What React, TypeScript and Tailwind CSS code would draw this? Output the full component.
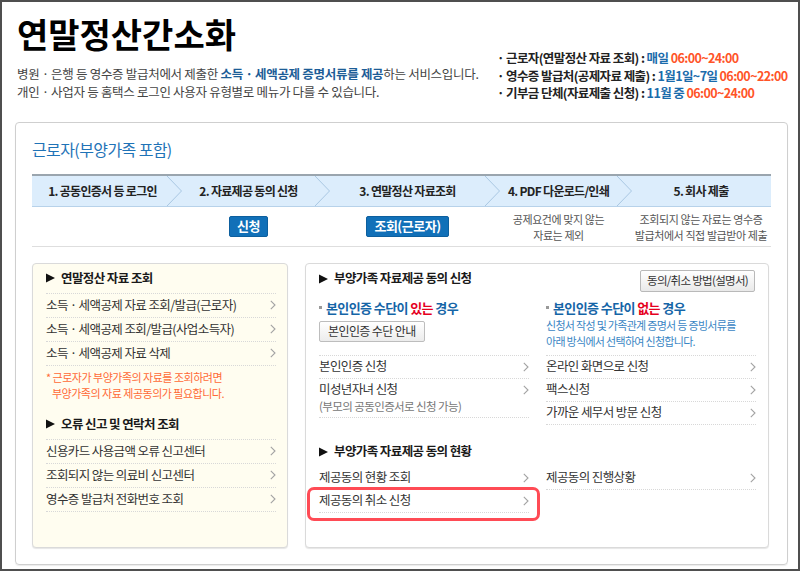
import React from "react";

// small grey chevron used at the end of every list row
function Arrow() {
  return (
    <svg width="6" height="10" viewBox="0 0 6 10" className="shrink-0">
      <polyline points="0.8,0.8 5,5 0.8,9.2" fill="none" stroke="#a3a3a3" strokeWidth="1.1" />
    </svg>
  );
}

function Tri() {
  return (
    <svg width="9" height="10" viewBox="0 0 9 10" className="shrink-0">
      <polygon points="0,0.5 9,5 0,9.5" fill="#111" />
    </svg>
  );
}

function StepArrow() {
  return (
    <svg width="15" height="30" viewBox="0 0 15 30" className="shrink-0">
      <polyline points="0,0 14.5,15 0,30" fill="none" stroke="#a9c7e2" strokeWidth="1" />
    </svg>
  );
}

interface RowProps {
  label: string;
}

function Row({ label }: RowProps) {
  return (
    <div className="flex items-center justify-between h-[24px] border-b border-dotted border-[#d8d8d8] text-[#333]">
      <span>{label}</span>
      <Arrow />
    </div>
  );
}

function SubRow({ label }: RowProps) {
  return (
    <div className="flex items-center justify-between h-[23px] border-b border-dotted border-[#d8d8d8] text-[#333]">
      <span>{label}</span>
      <Arrow />
    </div>
  );
}

function Heading({ children }: { children: React.ReactNode }) {
  return (
    <div className="flex items-center gap-[6px] font-bold text-[#1a1a1a]">
      <Tri />
      <span>{children}</span>
    </div>
  );
}

export default function App() {
  return (
    <div className="w-[800px] h-[571px] border-2 border-[#4f4f4f] bg-white overflow-hidden font-['Noto_Sans_CJK_KR','Malgun_Gothic',sans-serif] text-[12.5px] tracking-[-0.6px]">
      {/* header */}
      <div className="flex pl-[15px]">
        <div className="w-[480px] shrink-0">
          <h1 className="pt-[12px] text-[34px] leading-[40px] font-bold tracking-normal text-black">연말정산간소화</h1>
          <p className="mt-[11px] leading-[18px] text-[#444] tracking-[-0.3px] whitespace-nowrap">
            병원 · 은행 등 영수증 발급처에서 제출한{" "}
            <b className="text-[#1d5d97]">소득 · 세액공제 증명서류를 제공</b>하는 서비스입니다.
            <br />
            개인 · 사업자 등 홈택스 로그인 사용자 유형별로 메뉴가 다를 수 있습니다.
          </p>
        </div>
        <div className="pt-[47px] font-bold leading-[17.5px] text-[#222] whitespace-nowrap">
          <div>
            · 근로자(연말정산 자료 조회) : <span className="text-[#1a6bab]">매일</span>{" "}
            <span className="text-[#ff5428]">06:00~24:00</span>
          </div>
          <div>
            · 영수증 발급처(공제자료 제출) : <span className="text-[#1a6bab]">1월1일~7일</span>{" "}
            <span className="text-[#ff5428]">06:00~22:00</span>
          </div>
          <div>
            · 기부금 단체(자료제출 신청) : <span className="text-[#1a6bab]">11월 중</span>{" "}
            <span className="text-[#ff5428]">06:00~24:00</span>
          </div>
        </div>
      </div>

      {/* main card */}
      <div className="mt-[20px] ml-[13px] w-[773px] border border-[#cfcfcf] rounded-[4px] shadow-[0_1px_1px_rgba(0,0,0,0.08)] px-[16px] pt-[16px] pb-[16px]">
        <div className="text-[16px] leading-[20px] text-[#1f73b7] tracking-[-0.6px]">근로자(부양가족 포함)</div>

        {/* steps */}
        <div className="mt-[15px] flex h-[33px] border-t-2 border-t-[#9aa5ae] border-b border-b-[#b7d2ea] bg-[#dcedfc] font-bold text-[12px] tracking-[-0.7px] text-[#222]">
          <div className="w-[135px] flex items-center justify-center pl-[6px]">1. 공동인증서 등 로그인</div>
          <StepArrow />
          <div className="w-[133px] flex items-center justify-center">2. 자료제공 동의 신청</div>
          <StepArrow />
          <div className="w-[155px] flex items-center justify-center">3. 연말정산 자료조회</div>
          <StepArrow />
          <div className="w-[117px] flex items-center justify-center">4. PDF 다운로드/인쇄</div>
          <StepArrow />
          <div className="w-[138px] flex items-center justify-center">5. 회사 제출</div>
        </div>

        <div className="flex h-[40px] border-b border-[#dedede]">
          <div className="w-[135px]" />
          <div className="w-[15px]" />
          <div className="w-[133px] flex justify-center pt-[9px]">
            <span className="h-[21px] px-[7px] flex items-center rounded-[2px] bg-[#1170b8] border border-[#0d5f9e] text-white font-bold text-[13px] tracking-[-0.5px]">신청</span>
          </div>
          <div className="w-[15px]" />
          <div className="w-[155px] flex justify-center pt-[9px]">
            <span className="h-[21px] px-[7px] flex items-center rounded-[2px] bg-[#1170b8] border border-[#0d5f9e] text-white font-bold text-[13px] tracking-[-0.5px]">조회(근로자)</span>
          </div>
          <div className="w-[15px]" />
          <div className="w-[117px] pt-[4px] text-center text-[11px] leading-[16px] text-[#555] tracking-[-0.4px] whitespace-nowrap">
            공제요건에 맞지 않는
            <br />
            자료는 제외
          </div>
          <div className="w-[15px]" />
          <div className="w-[138px] pt-[4px] text-center text-[11px] leading-[16px] text-[#555] tracking-[-0.4px] whitespace-nowrap">
            조회되지 않는 자료는 영수증
            <br />
            발급처에서 직접 발급받아 제출
          </div>
        </div>

        {/* panels */}
        <div className="mt-[16px] flex gap-[17px]">
          {/* left panel */}
          <div className="w-[256px] h-[285px] shrink-0 rounded-[4px] border border-[#dadada] bg-[#fffdf0] shadow-[0_1px_1px_rgba(0,0,0,0.1)] pl-[13px] pr-[11px]">
            <div className="h-[30px] flex items-center border-b border-dotted border-[#d8d8d8]">
              <Heading>연말정산 자료 조회</Heading>
            </div>
            <Row label="소득 · 세액공제 자료 조회/발급(근로자)" />
            <Row label="소득 · 세액공제 조회/발급(사업소득자)" />
            <Row label="소득 · 세액공제 자료 삭제" />
            <p className="mt-[3px] text-[11px] leading-[16px] text-[#ff6a36] tracking-[-0.5px] whitespace-nowrap">
              * 근로자가 부양가족의 자료를 조회하려면
              <br />
              <span className="pl-[6px]">부양가족의 자료 제공동의가 필요합니다.</span>
            </p>
            <div className="mt-[9px] h-[30px] flex items-center border-b border-dotted border-[#d8d8d8]">
              <Heading>오류 신고 및 연락처 조회</Heading>
            </div>
            <Row label="신용카드 사용금액 오류 신고센터" />
            <Row label="조회되지 않는 의료비 신고센터" />
            <Row label="영수증 발급처 전화번호 조회" />
          </div>

          {/* right panel */}
          <div className="w-[464px] h-[285px] shrink-0 rounded-[4px] border border-[#dadada] bg-white shadow-[0_1px_1px_rgba(0,0,0,0.1)] pl-[13px] pr-[12px]">
            <div className="h-[30px] flex items-center justify-between">
              <Heading>부양가족 자료제공 동의 신청</Heading>
              <span className="mt-[5px] mr-[1px] h-[22px] px-[6px] flex items-center border border-[#b9b9b9] rounded-[2px] bg-gradient-to-b from-[#ffffff] to-[#e9e9e9] text-[11.5px] text-[#333] tracking-[-0.7px]">
                동의/취소 방법(설명서)
              </span>
            </div>

            <div className="flex gap-[17px]">
              <div className="w-[210px]">
                <div className="h-[61px] pt-[5px]">
                  <div className="flex items-center gap-[4px] leading-[18px] font-bold text-[13px] text-[#1565a7] tracking-[-0.6px]">
                    <span className="w-[3px] h-[3px] bg-[#999]" />
                    <span>
                      본인인증 수단이 <span className="text-[#e5001e]">있는</span> 경우
                    </span>
                  </div>
                  <span className="mt-[4px] inline-flex h-[21px] px-[8px] items-center border border-[#bdbdbd] rounded-[2px] bg-gradient-to-b from-[#ffffff] to-[#ececec] text-[12px] text-[#333]">
                    본인인증 수단 안내
                  </span>
                </div>
                <div className="border-t border-dotted border-[#d8d8d8]">
                  <SubRow label="본인인증 신청" />
                  <div className="flex justify-between border-b border-dotted border-[#d8d8d8] pt-[1px] pb-[2px]">
                    <div>
                      <div className="leading-[18px] text-[#333]">미성년자녀 신청</div>
                      <div className="leading-[17px] text-[#777] text-[11.5px]">(부모의 공동인증서로 신청 가능)</div>
                    </div>
                    <div className="pt-[5px]">
                      <Arrow />
                    </div>
                  </div>
                </div>
              </div>

              <div className="w-[210px]">
                <div className="h-[61px] pt-[5px]">
                  <div className="flex items-center gap-[4px] leading-[18px] font-bold text-[13px] text-[#1565a7] tracking-[-0.6px]">
                    <span className="w-[3px] h-[3px] bg-[#999]" />
                    <span>
                      본인인증 수단이 <span className="text-[#e5001e]">없는</span> 경우
                    </span>
                  </div>
                  <p className="text-[11px] leading-[16px] text-[#3a86c4] tracking-[-0.7px] whitespace-nowrap">
                    신청서 작성 및 가족관계 증명서 등 증빙서류를
                    <br />
                    아래 방식에서 선택하여 신청합니다.
                  </p>
                </div>
                <div className="border-t border-dotted border-[#d8d8d8]">
                  <SubRow label="온라인 화면으로 신청" />
                  <SubRow label="팩스신청" />
                  <SubRow label="가까운 세무서 방문 신청" />
                </div>
              </div>
            </div>

            <div className="mt-[12px] h-[30px] flex items-center">
              <Heading>부양가족 자료제공 동의 현황</Heading>
            </div>
            <div className="flex gap-[17px]">
              <div className="w-[210px]">
                <SubRow label="제공동의 현황 조회" />
                <div className="relative">
                  <SubRow label="제공동의 취소 신청" />
                  {/* red highlight annotation */}
                  <div className="absolute -left-[12px] -right-[11px] -top-[3px] -bottom-[8px] border-[3px] border-[#ff4b55] rounded-[7px]" />
                </div>
              </div>
              <div className="w-[210px]">
                <SubRow label="제공동의 진행상황" />
              </div>
            </div>
          </div>
        </div>
      </div>
    </div>
  );
}
